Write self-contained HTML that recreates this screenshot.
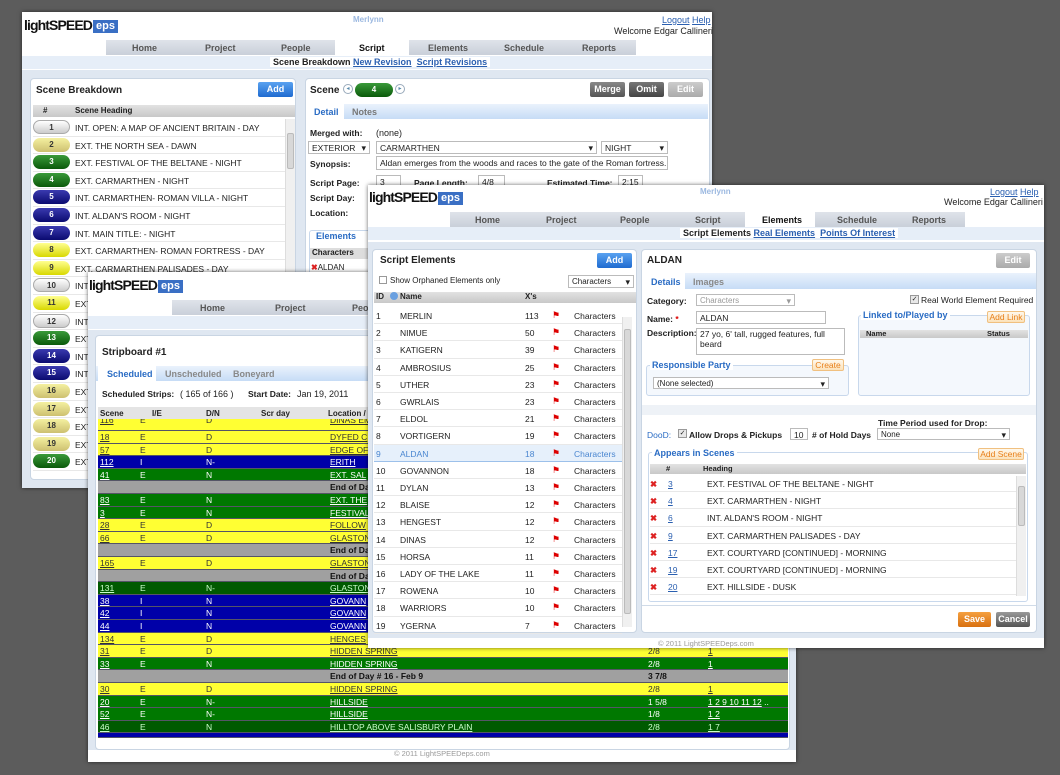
<!DOCTYPE html>
<html><head><meta charset="utf-8">
<style>
*{margin:0;padding:0;box-sizing:border-box}
body{width:1060px;height:775px;background:#5c5c5c;position:relative;overflow:hidden;font-family:"Liberation Sans",sans-serif;font-size:9px;color:#222}
.a{position:absolute;white-space:nowrap}
.win{position:absolute;background:#fff;box-shadow:0 0 4px rgba(0,0,0,.6)}
.logo{position:absolute;font-weight:bold;font-size:14px;letter-spacing:-0.9px;color:#111;font-family:"Liberation Sans Narrow","Liberation Sans",sans-serif}
.logo span{display:inline-block;background:#3a6fc4;color:#fff;font-size:11px;padding:0 3px;margin-left:1px;line-height:13px;vertical-align:1px;letter-spacing:0}
.tabs{position:absolute;height:15px;background:linear-gradient(#dfe3ea,#c9cfd9)}
.tab{position:absolute;top:2px;font-size:9px;color:#555;font-weight:bold}
.tact{position:absolute;background:#fff;height:17px;top:0}
.sub{position:absolute;height:13px;background:#e6eef8}
.lnk{color:#2a5fb0;text-decoration:underline}
.bg{position:absolute;background:#dfe7f1}
.pan{position:absolute;background:#fff;border-radius:4px;border:1px solid #c9d5e3}
.ttl{position:absolute;font-weight:bold;font-size:10px}
.btn{position:absolute;background:linear-gradient(#5aa2f0,#1f6bd0);color:#fff;font-weight:bold;text-align:center;border-radius:2px;font-size:9px;line-height:15px}
.gbtn{position:absolute;background:linear-gradient(#999,#666);color:#fff;font-weight:bold;text-align:center;border-radius:2px;font-size:9px;line-height:15px}
.hrow{position:absolute;background:linear-gradient(#e2e2e2,#c8c8c8);font-weight:bold;font-size:8px}
.pill{position:absolute;width:37px;height:14px;border-radius:7px;text-align:center;font-weight:bold;font-size:8px;line-height:14px}
.pw{background:linear-gradient(#fff,#ccc);color:#333;border:1px solid #aaa}
.py{background:linear-gradient(#ffff90,#d8d800);color:#333}
.pk{background:linear-gradient(#f4f0a0,#cdc070);color:#333}
.pg{background:linear-gradient(#3a9a3a,#0a5a0a);color:#fff}
.pb{background:linear-gradient(#3a3ab0,#0a0a70);color:#fff}
.row{position:absolute;border-bottom:1px solid #e8e8e8;font-size:8.5px}
.inp{position:absolute;border:1px solid #bbb;background:#fff;font-size:8.5px;padding-left:3px;line-height:12px}
.sel:after{content:"▾";position:absolute;right:3px;top:0;font-size:9px}
.lab{position:absolute;font-weight:bold;font-size:8.5px}
.sb{position:absolute;background:#f0f0f0;border-left:1px solid #ddd}
.sb i{position:absolute;left:1px;right:1px;background:#d8d8d8;border:1px solid #bbb;border-radius:2px}
.st{position:absolute;left:98px;width:690px;height:12.6px;font-size:8.5px;line-height:12px;border-bottom:1px solid #556}
.st span{position:absolute}
.Y{background:#ffff33;color:#333}.B{background:#0000a8;color:#fff}.G{background:#007800;color:#fff}.D{background:#005a00;color:#cfc}.R{background:#a0a0a0;color:#111;font-weight:bold}
.st u{text-decoration:underline}
.fs{position:absolute;border:1px solid #c8d8ec;border-radius:3px;background:#f4f8fd}
.fl{position:absolute;color:#2a6cc4;font-weight:bold;font-size:9px;background:#fff;padding:0 2px}
.obtn{position:absolute;background:linear-gradient(#fff8ec,#fbe2bb);border:1px solid #f0c080;color:#e8801a;font-size:8.5px;text-align:center;line-height:11px;border-radius:2px}
.x{color:#d22;font-weight:bold}
.flag{color:#d00;font-size:9px}
</style></head><body>

<!-- WINDOW 1 -->
<div class="win" style="left:22px;top:12px;width:690px;height:476px">
<div class="logo" style="left:2px;top:5px">lightSPEED<span>eps</span></div>
<div class="a" style="left:331px;top:3px;color:#9bb8e0;font-size:8px;font-weight:bold">Merlynn</div>
<div class="a" style="left:640px;top:3px"><span class="lnk">Logout</span> <span class="lnk">Help</span></div>
<div class="a" style="left:592px;top:14px">Welcome Edgar Callineri</div>
<div class="tabs" style="left:84px;top:28px;width:530px"></div>
<div class="tact" style="left:313px;top:27px;width:74px"></div>
<div class="a tab" style="left:110px;top:31px">Home</div>
<div class="a tab" style="left:183px;top:31px">Project</div>
<div class="a tab" style="left:259px;top:31px">People</div>
<div class="a tab" style="left:337px;top:31px;color:#111">Script</div>
<div class="a tab" style="left:406px;top:31px">Elements</div>
<div class="a tab" style="left:482px;top:31px">Schedule</div>
<div class="a tab" style="left:560px;top:31px">Reports</div>
<div class="sub" style="left:0;top:44px;width:690px"></div>
<div class="a" style="left:248px;top:45px;background:#fff;padding:0 3px;font-weight:bold">Scene Breakdown <span class="lnk" style="font-weight:bold">New Revision</span> &nbsp;<span class="lnk" style="font-weight:bold">Script Revisions</span></div>
<div class="bg" style="left:0;top:58px;width:690px;height:418px"></div>
</div>
<div class="pan" style="left:30px;top:78px;width:266px;height:402px"></div>
<div class="ttl" style="left:36px;top:85px">Scene Breakdown</div>
<div class="btn" style="left:258px;top:82px;width:35px">Add</div>
<div class="hrow" style="left:33px;top:105px;width:262px;height:12px"><span class="a" style="left:10px;top:1px">#</span><span class="a" style="left:42px;top:1px">Scene Heading</span></div>
<div class="sb" style="left:285px;top:119px;width:10px;height:356px"><i style="top:14px;height:36px"></i></div>

<!-- WINDOW 1 right panel -->
<div class="pan" style="left:305px;top:78px;width:405px;height:200px"></div>
<div class="ttl" style="left:310px;top:85px">Scene</div>
<div class="a" style="left:343px;top:84px;width:10px;height:10px;border-radius:5px;border:1px solid #9ab;font-size:6px;text-align:center;color:#58a">◂</div>
<div class="pill pg" style="left:355px;top:83px;width:38px">4</div>
<div class="a" style="left:395px;top:84px;width:10px;height:10px;border-radius:5px;border:1px solid #9ab;font-size:6px;text-align:center;color:#58a">▸</div>
<div class="gbtn" style="left:590px;top:82px;width:35px;background:linear-gradient(#888,#555)">Merge</div>
<div class="gbtn" style="left:629px;top:82px;width:35px;background:linear-gradient(#777,#444)">Omit</div>
<div class="gbtn" style="left:668px;top:82px;width:35px;background:linear-gradient(#ccc,#aaa)">Edit</div>
<div class="a" style="left:306px;top:104px;width:402px;height:15px;background:linear-gradient(#eaf2fc,#c6dcf6)"></div>
<div class="a" style="left:306px;top:104px;width:38px;height:16px;background:#fff"></div>
<div class="a" style="left:314px;top:107px;color:#2a6cc4;font-weight:bold">Detail</div>
<div class="a" style="left:352px;top:107px;color:#777;font-weight:bold">Notes</div>
<div class="lab" style="left:310px;top:128px">Merged with:</div><div class="a" style="left:376px;top:128px">(none)</div>
<div class="inp sel" style="left:308px;top:141px;width:62px;height:13px">EXTERIOR</div>
<div class="inp sel" style="left:376px;top:141px;width:221px;height:13px">CARMARTHEN</div>
<div class="inp sel" style="left:601px;top:141px;width:67px;height:13px">NIGHT</div>
<div class="lab" style="left:310px;top:159px">Synopsis:</div>
<div class="inp" style="left:376px;top:156px;width:292px;height:14px">Aldan emerges from the woods and races to the gate of the Roman fortress.</div>
<div class="lab" style="left:310px;top:178px">Script Page:</div><div class="inp" style="left:376px;top:175px;width:25px;height:13px">3</div>
<div class="lab" style="left:414px;top:178px">Page Length:</div><div class="inp" style="left:478px;top:175px;width:27px;height:13px">4/8</div>
<div class="lab" style="left:547px;top:178px">Estimated Time:</div><div class="inp" style="left:618px;top:175px;width:25px;height:13px">2:15</div>
<div class="lab" style="left:310px;top:193px">Script Day:</div>
<div class="lab" style="left:310px;top:208px">Location:</div>
<div class="fs" style="left:309px;top:230px;width:80px;height:50px;background:#fff"></div>
<div class="fl" style="left:314px;top:231px">Elements</div>
<div class="a" style="left:310px;top:248px;width:60px;height:11px;background:#ddd;font-weight:bold;font-size:8px;padding-left:2px">Characters</div>
<div class="a" style="left:311px;top:263px;font-size:8px"><span class="x">✖</span>ALDAN</div>

<div class="a" style="left:33px;top:119px;width:252px">
<div class="row" style="left:0;top:0;width:252px;height:17.6px"><div class="pill pw" style="left:0;top:1px">1</div><span class="a" style="left:42px;top:4px">INT. OPEN: A MAP OF ANCIENT BRITAIN - DAY</span></div>
<div class="row" style="left:0;top:17.6px;width:252px;height:17.6px"><div class="pill pk" style="left:0;top:1px">2</div><span class="a" style="left:42px;top:4px">EXT. THE NORTH SEA - DAWN</span></div>
<div class="row" style="left:0;top:35.2px;width:252px;height:17.6px"><div class="pill pg" style="left:0;top:1px">3</div><span class="a" style="left:42px;top:4px">EXT. FESTIVAL OF THE BELTANE - NIGHT</span></div>
<div class="row" style="left:0;top:52.8px;width:252px;height:17.6px"><div class="pill pg" style="left:0;top:1px">4</div><span class="a" style="left:42px;top:4px">EXT. CARMARTHEN - NIGHT</span></div>
<div class="row" style="left:0;top:70.4px;width:252px;height:17.6px"><div class="pill pb" style="left:0;top:1px">5</div><span class="a" style="left:42px;top:4px">INT. CARMARTHEN- ROMAN VILLA - NIGHT</span></div>
<div class="row" style="left:0;top:88px;width:252px;height:17.6px"><div class="pill pb" style="left:0;top:1px">6</div><span class="a" style="left:42px;top:4px">INT. ALDAN'S ROOM - NIGHT</span></div>
<div class="row" style="left:0;top:105.6px;width:252px;height:17.6px"><div class="pill pb" style="left:0;top:1px">7</div><span class="a" style="left:42px;top:4px">INT. MAIN TITLE: - NIGHT</span></div>
<div class="row" style="left:0;top:123.2px;width:252px;height:17.6px"><div class="pill py" style="left:0;top:1px">8</div><span class="a" style="left:42px;top:4px">EXT. CARMARTHEN- ROMAN FORTRESS - DAY</span></div>
<div class="row" style="left:0;top:140.8px;width:252px;height:17.6px"><div class="pill py" style="left:0;top:1px">9</div><span class="a" style="left:42px;top:4px">EXT. CARMARTHEN PALISADES - DAY</span></div>
<div class="row" style="left:0;top:158.4px;width:252px;height:17.6px"><div class="pill pw" style="left:0;top:1px">10</div><span class="a" style="left:42px;top:4px">INT</span></div>
<div class="row" style="left:0;top:176px;width:252px;height:17.6px"><div class="pill py" style="left:0;top:1px">11</div><span class="a" style="left:42px;top:4px">EXT</span></div>
<div class="row" style="left:0;top:193.6px;width:252px;height:17.6px"><div class="pill pw" style="left:0;top:1px">12</div><span class="a" style="left:42px;top:4px">INT</span></div>
<div class="row" style="left:0;top:211.2px;width:252px;height:17.6px"><div class="pill pg" style="left:0;top:1px">13</div><span class="a" style="left:42px;top:4px">EXT</span></div>
<div class="row" style="left:0;top:228.8px;width:252px;height:17.6px"><div class="pill pb" style="left:0;top:1px">14</div><span class="a" style="left:42px;top:4px">INT</span></div>
<div class="row" style="left:0;top:246.4px;width:252px;height:17.6px"><div class="pill pb" style="left:0;top:1px">15</div><span class="a" style="left:42px;top:4px">INT</span></div>
<div class="row" style="left:0;top:264px;width:252px;height:17.6px"><div class="pill pk" style="left:0;top:1px">16</div><span class="a" style="left:42px;top:4px">EXT</span></div>
<div class="row" style="left:0;top:281.6px;width:252px;height:17.6px"><div class="pill pk" style="left:0;top:1px">17</div><span class="a" style="left:42px;top:4px">EXT</span></div>
<div class="row" style="left:0;top:299.2px;width:252px;height:17.6px"><div class="pill pk" style="left:0;top:1px">18</div><span class="a" style="left:42px;top:4px">EXT</span></div>
<div class="row" style="left:0;top:316.8px;width:252px;height:17.6px"><div class="pill pk" style="left:0;top:1px">19</div><span class="a" style="left:42px;top:4px">EXT</span></div>
<div class="row" style="left:0;top:334.4px;width:252px;height:17.6px"><div class="pill pg" style="left:0;top:1px">20</div><span class="a" style="left:42px;top:4px">EXT</span></div>
</div>

<!-- WINDOW 2 -->
<div class="win" style="left:88px;top:272px;width:708px;height:490px">
<div class="logo" style="left:1px;top:5px">lightSPEED<span>eps</span></div>
<div class="tabs" style="left:84px;top:28px;width:600px"></div>
<div class="a tab" style="left:112px;top:31px">Home</div>
<div class="a tab" style="left:187px;top:31px">Project</div>
<div class="a tab" style="left:264px;top:31px">Peo</div>
<div class="sub" style="left:0;top:44px;width:708px"></div>
<div class="bg" style="left:0;top:58px;width:708px;height:420px"></div>
<div class="a" style="left:306px;top:477px;color:#999;font-size:7.5px">© 2011 LightSPEEDeps.com</div>
</div>
<div class="pan" style="left:95px;top:335px;width:695px;height:415px"></div>
<div class="ttl" style="left:102px;top:347px">Stripboard #1</div>
<div class="a" style="left:96px;top:366px;width:690px;height:15px;background:linear-gradient(#eaf2fc,#c6dcf6)"></div>
<div class="a" style="left:98px;top:366px;width:58px;height:16px;background:#fff"></div>
<div class="a" style="left:107px;top:369px;color:#2a6cc4;font-weight:bold">Scheduled</div>
<div class="a" style="left:165px;top:369px;color:#888;font-weight:bold">Unscheduled</div>
<div class="a" style="left:233px;top:369px;color:#888;font-weight:bold">Boneyard</div>
<div class="lab" style="left:102px;top:389px">Scheduled Strips:</div>
<div class="a" style="left:180px;top:389px">( 165 of 166 )</div>
<div class="lab" style="left:248px;top:389px">Start Date:</div><div class="a" style="left:297px;top:389px">Jan 19, 2011</div>
<div class="hrow" style="left:98px;top:407px;width:690px;height:13px;background:#e4e4e4"><span class="a" style="left:2px;top:2px">Scene</span><span class="a" style="left:54px;top:2px">I/E</span><span class="a" style="left:108px;top:2px">D/N</span><span class="a" style="left:163px;top:2px">Scr day</span><span class="a" style="left:230px;top:2px">Location /</span></div>

<div class="st Y" style="top:419px;height:12px;overflow:hidden"><span style="left:2px;top:-5px"><u>116</u></span><span style="left:42px;top:-5px">E</span><span style="left:108px;top:-5px">D</span><span style="left:232px;top:-5px"><u>DINAS EM</u></span></div>
<div class="st Y" style="top:431px"><span style="left:2px"><u>18</u></span><span style="left:42px">E</span><span style="left:108px">D</span><span style="left:232px"><u>DYFED C</u></span></div>
<div class="st Y" style="top:443.6px"><span style="left:2px"><u>57</u></span><span style="left:42px">E</span><span style="left:108px">D</span><span style="left:232px"><u>EDGE OF</u></span></div>
<div class="st B" style="top:456.2px"><span style="left:2px"><u>112</u></span><span style="left:42px">I</span><span style="left:108px">N-</span><span style="left:232px"><u>ERITH</u></span></div>
<div class="st G" style="top:468.8px"><span style="left:2px"><u>41</u></span><span style="left:42px">E</span><span style="left:108px">N</span><span style="left:232px"><u>EXT. SAL</u></span></div>
<div class="st R" style="top:481.4px"><span style="left:232px">End of Da</span></div>
<div class="st G" style="top:494px"><span style="left:2px"><u>83</u></span><span style="left:42px">E</span><span style="left:108px">N</span><span style="left:232px"><u>EXT. THE</u></span></div>
<div class="st G" style="top:506.6px"><span style="left:2px"><u>3</u></span><span style="left:42px">E</span><span style="left:108px">N</span><span style="left:232px"><u>FESTIVAL</u></span></div>
<div class="st Y" style="top:519.2px"><span style="left:2px"><u>28</u></span><span style="left:42px">E</span><span style="left:108px">D</span><span style="left:232px"><u>FOLLOW</u></span></div>
<div class="st Y" style="top:531.8px"><span style="left:2px"><u>66</u></span><span style="left:42px">E</span><span style="left:108px">D</span><span style="left:232px"><u>GLASTON</u></span></div>
<div class="st R" style="top:544.4px"><span style="left:232px">End of Da</span></div>
<div class="st Y" style="top:557px"><span style="left:2px"><u>165</u></span><span style="left:42px">E</span><span style="left:108px">D</span><span style="left:232px"><u>GLASTON</u></span></div>
<div class="st R" style="top:569.6px"><span style="left:232px">End of Da</span></div>
<div class="st D" style="top:582.2px"><span style="left:2px"><u>131</u></span><span style="left:42px">E</span><span style="left:108px">N-</span><span style="left:232px"><u>GLASTON</u></span></div>
<div class="st B" style="top:594.8px"><span style="left:2px"><u>38</u></span><span style="left:42px">I</span><span style="left:108px">N</span><span style="left:232px"><u>GOVANN</u></span></div>
<div class="st B" style="top:607.4px"><span style="left:2px"><u>42</u></span><span style="left:42px">I</span><span style="left:108px">N</span><span style="left:232px"><u>GOVANN</u></span></div>
<div class="st B" style="top:620px"><span style="left:2px"><u>44</u></span><span style="left:42px">I</span><span style="left:108px">N</span><span style="left:232px"><u>GOVANN</u></span></div>
<div class="st Y" style="top:632.6px"><span style="left:2px"><u>134</u></span><span style="left:42px">E</span><span style="left:108px">D</span><span style="left:232px"><u>HENGES</u></span></div>
<div class="st Y" style="top:645.2px"><span style="left:2px"><u>31</u></span><span style="left:42px">E</span><span style="left:108px">D</span><span style="left:232px"><u>HIDDEN SPRING</u></span><span style="left:550px">2/8</span><span style="left:610px"><u>1</u></span></div>
<div class="st G" style="top:657.8px"><span style="left:2px"><u>33</u></span><span style="left:42px">E</span><span style="left:108px">N</span><span style="left:232px"><u>HIDDEN SPRING</u></span><span style="left:550px">2/8</span><span style="left:610px"><u>1</u></span></div>
<div class="st R" style="top:670.4px"><span style="left:232px">End of Day # 16 - Feb 9</span><span style="left:550px">3 7/8</span></div>
<div class="st Y" style="top:683px"><span style="left:2px"><u>30</u></span><span style="left:42px">E</span><span style="left:108px">D</span><span style="left:232px"><u>HIDDEN SPRING</u></span><span style="left:550px">2/8</span><span style="left:610px"><u>1</u></span></div>
<div class="st G" style="top:695.6px"><span style="left:2px"><u>20</u></span><span style="left:42px">E</span><span style="left:108px">N-</span><span style="left:232px"><u>HILLSIDE</u></span><span style="left:550px">1 5/8</span><span style="left:610px"><u>1 2 9 10 11 12</u> ..</span></div>
<div class="st G" style="top:708.2px"><span style="left:2px"><u>52</u></span><span style="left:42px">E</span><span style="left:108px">N-</span><span style="left:232px"><u>HILLSIDE</u></span><span style="left:550px">1/8</span><span style="left:610px"><u>1 2</u></span></div>
<div class="st D" style="top:720.8px"><span style="left:2px"><u>46</u></span><span style="left:42px">E</span><span style="left:108px">N</span><span style="left:232px"><u>HILLTOP ABOVE SALISBURY PLAIN</u></span><span style="left:550px">2/8</span><span style="left:610px"><u>1 7</u></span></div>
<div class="st B" style="top:733.4px;height:5px;overflow:hidden"></div>

<!-- WINDOW 3 -->
<div class="win" style="left:368px;top:185px;width:676px;height:463px">
<div class="logo" style="left:1px;top:4px">lightSPEED<span>eps</span></div>
<div class="a" style="left:332px;top:2px;color:#9bb8e0;font-size:8px;font-weight:bold">Merlynn</div>
<div class="a" style="left:622px;top:2px"><span class="lnk">Logout</span> <span class="lnk">Help</span></div>
<div class="a" style="left:576px;top:12px">Welcome Edgar Callineri</div>
<div class="tabs" style="left:82px;top:27px;width:515px"></div>
<div class="tact" style="left:377px;top:26px;width:70px"></div>
<div class="a tab" style="left:107px;top:30px">Home</div>
<div class="a tab" style="left:178px;top:30px">Project</div>
<div class="a tab" style="left:252px;top:30px">People</div>
<div class="a tab" style="left:327px;top:30px">Script</div>
<div class="a tab" style="left:394px;top:30px;color:#111">Elements</div>
<div class="a tab" style="left:469px;top:30px">Schedule</div>
<div class="a tab" style="left:544px;top:30px">Reports</div>
<div class="sub" style="left:0;top:42px;width:676px"></div>
<div class="a" style="left:312px;top:43px;background:#fff;padding:0 3px;font-weight:bold">Script Elements <span class="lnk">Real Elements</span> &nbsp;<span class="lnk">Points Of Interest</span></div>
<div class="bg" style="left:0;top:57px;width:676px;height:396px"></div>
<div class="a" style="left:290px;top:454px;color:#999;font-size:7.5px">© 2011 LightSPEEDeps.com</div>
</div>
<div class="pan" style="left:372px;top:249px;width:265px;height:384px"></div>
<div class="ttl" style="left:380px;top:255px">Script Elements</div>
<div class="btn" style="left:597px;top:253px;width:35px">Add</div>
<div class="a" style="left:379px;top:276px;width:8px;height:8px;border:1px solid #999;background:#fff"></div>
<div class="a" style="left:390px;top:276px;font-size:8px">Show Orphaned Elements only</div>
<div class="inp sel" style="left:568px;top:275px;width:66px;height:13px;font-size:8px">Characters</div>
<div class="hrow" style="left:374px;top:292px;width:262px;height:11px"><span class="a" style="left:2px;top:0">ID</span><span class="a" style="left:16px;top:0;width:8px;height:8px;border-radius:4px;background:#6aa0e0"></span><span class="a" style="left:26px;top:0">Name</span><span class="a" style="left:151px;top:0">X's</span></div>
<div class="sb" style="left:622px;top:317px;width:10px;height:310px"><i style="top:12px;height:285px"></i></div>
<div class="a" style="left:374px;top:307px;width:248px;font-size:8px">
<div class="row" style="top:0;width:248px;height:17.2px"><span class="a" style="left:2px;top:4px">1</span><span class="a" style="left:26px;top:4px">MERLIN</span><span class="a" style="left:151px;top:4px">113</span><span class="a flag" style="left:178px;top:3px">⚑</span><span class="a" style="left:200px;top:4px">Characters</span></div>
<div class="row" style="top:17.2px;width:248px;height:17.2px"><span class="a" style="left:2px;top:4px">2</span><span class="a" style="left:26px;top:4px">NIMUE</span><span class="a" style="left:151px;top:4px">50</span><span class="a flag" style="left:178px;top:3px">⚑</span><span class="a" style="left:200px;top:4px">Characters</span></div>
<div class="row" style="top:34.4px;width:248px;height:17.2px"><span class="a" style="left:2px;top:4px">3</span><span class="a" style="left:26px;top:4px">KATIGERN</span><span class="a" style="left:151px;top:4px">39</span><span class="a flag" style="left:178px;top:3px">⚑</span><span class="a" style="left:200px;top:4px">Characters</span></div>
<div class="row" style="top:51.6px;width:248px;height:17.2px"><span class="a" style="left:2px;top:4px">4</span><span class="a" style="left:26px;top:4px">AMBROSIUS</span><span class="a" style="left:151px;top:4px">25</span><span class="a flag" style="left:178px;top:3px">⚑</span><span class="a" style="left:200px;top:4px">Characters</span></div>
<div class="row" style="top:68.8px;width:248px;height:17.2px"><span class="a" style="left:2px;top:4px">5</span><span class="a" style="left:26px;top:4px">UTHER</span><span class="a" style="left:151px;top:4px">23</span><span class="a flag" style="left:178px;top:3px">⚑</span><span class="a" style="left:200px;top:4px">Characters</span></div>
<div class="row" style="top:86px;width:248px;height:17.2px"><span class="a" style="left:2px;top:4px">6</span><span class="a" style="left:26px;top:4px">GWRLAIS</span><span class="a" style="left:151px;top:4px">23</span><span class="a flag" style="left:178px;top:3px">⚑</span><span class="a" style="left:200px;top:4px">Characters</span></div>
<div class="row" style="top:103.2px;width:248px;height:17.2px"><span class="a" style="left:2px;top:4px">7</span><span class="a" style="left:26px;top:4px">ELDOL</span><span class="a" style="left:151px;top:4px">21</span><span class="a flag" style="left:178px;top:3px">⚑</span><span class="a" style="left:200px;top:4px">Characters</span></div>
<div class="row" style="top:120.4px;width:248px;height:17.2px"><span class="a" style="left:2px;top:4px">8</span><span class="a" style="left:26px;top:4px">VORTIGERN</span><span class="a" style="left:151px;top:4px">19</span><span class="a flag" style="left:178px;top:3px">⚑</span><span class="a" style="left:200px;top:4px">Characters</span></div>
<div class="row" style="top:137.6px;width:248px;height:17.2px;background:#e6f0fb;color:#4a86d0;border-bottom:1px solid #9cc0ea"><span class="a" style="left:2px;top:4px">9</span><span class="a" style="left:26px;top:4px">ALDAN</span><span class="a" style="left:151px;top:4px">18</span><span class="a flag" style="left:178px;top:3px">⚑</span><span class="a" style="left:200px;top:4px">Characters</span></div>
<div class="row" style="top:154.8px;width:248px;height:17.2px"><span class="a" style="left:2px;top:4px">10</span><span class="a" style="left:26px;top:4px">GOVANNON</span><span class="a" style="left:151px;top:4px">18</span><span class="a flag" style="left:178px;top:3px">⚑</span><span class="a" style="left:200px;top:4px">Characters</span></div>
<div class="row" style="top:172px;width:248px;height:17.2px"><span class="a" style="left:2px;top:4px">11</span><span class="a" style="left:26px;top:4px">DYLAN</span><span class="a" style="left:151px;top:4px">13</span><span class="a flag" style="left:178px;top:3px">⚑</span><span class="a" style="left:200px;top:4px">Characters</span></div>
<div class="row" style="top:189.2px;width:248px;height:17.2px"><span class="a" style="left:2px;top:4px">12</span><span class="a" style="left:26px;top:4px">BLAISE</span><span class="a" style="left:151px;top:4px">12</span><span class="a flag" style="left:178px;top:3px">⚑</span><span class="a" style="left:200px;top:4px">Characters</span></div>
<div class="row" style="top:206.4px;width:248px;height:17.2px"><span class="a" style="left:2px;top:4px">13</span><span class="a" style="left:26px;top:4px">HENGEST</span><span class="a" style="left:151px;top:4px">12</span><span class="a flag" style="left:178px;top:3px">⚑</span><span class="a" style="left:200px;top:4px">Characters</span></div>
<div class="row" style="top:223.6px;width:248px;height:17.2px"><span class="a" style="left:2px;top:4px">14</span><span class="a" style="left:26px;top:4px">DINAS</span><span class="a" style="left:151px;top:4px">12</span><span class="a flag" style="left:178px;top:3px">⚑</span><span class="a" style="left:200px;top:4px">Characters</span></div>
<div class="row" style="top:240.8px;width:248px;height:17.2px"><span class="a" style="left:2px;top:4px">15</span><span class="a" style="left:26px;top:4px">HORSA</span><span class="a" style="left:151px;top:4px">11</span><span class="a flag" style="left:178px;top:3px">⚑</span><span class="a" style="left:200px;top:4px">Characters</span></div>
<div class="row" style="top:258px;width:248px;height:17.2px"><span class="a" style="left:2px;top:4px">16</span><span class="a" style="left:26px;top:4px">LADY OF THE LAKE</span><span class="a" style="left:151px;top:4px">11</span><span class="a flag" style="left:178px;top:3px">⚑</span><span class="a" style="left:200px;top:4px">Characters</span></div>
<div class="row" style="top:275.2px;width:248px;height:17.2px"><span class="a" style="left:2px;top:4px">17</span><span class="a" style="left:26px;top:4px">ROWENA</span><span class="a" style="left:151px;top:4px">10</span><span class="a flag" style="left:178px;top:3px">⚑</span><span class="a" style="left:200px;top:4px">Characters</span></div>
<div class="row" style="top:292.4px;width:248px;height:17.2px"><span class="a" style="left:2px;top:4px">18</span><span class="a" style="left:26px;top:4px">WARRIORS</span><span class="a" style="left:151px;top:4px">10</span><span class="a flag" style="left:178px;top:3px">⚑</span><span class="a" style="left:200px;top:4px">Characters</span></div>
<div class="row" style="top:309.6px;width:248px;height:17.2px"><span class="a" style="left:2px;top:4px">19</span><span class="a" style="left:26px;top:4px">YGERNA</span><span class="a" style="left:151px;top:4px">7</span><span class="a flag" style="left:178px;top:3px">⚑</span><span class="a" style="left:200px;top:4px">Characters</span></div>
</div>

<!-- right panel window 3 -->
<div class="pan" style="left:641px;top:249px;width:396px;height:384px"></div>
<div class="ttl" style="left:647px;top:255px">ALDAN</div>
<div class="gbtn" style="left:996px;top:253px;width:34px;background:linear-gradient(#ccc,#aaa)">Edit</div>
<div class="a" style="left:643px;top:273px;width:393px;height:16px;background:linear-gradient(#eaf2fc,#c6dcf6)"></div>
<div class="a" style="left:643px;top:273px;width:42px;height:17px;background:#fff"></div>
<div class="a" style="left:651px;top:277px;color:#2a6cc4;font-weight:bold">Details</div>
<div class="a" style="left:693px;top:277px;color:#888;font-weight:bold">Images</div>
<div class="lab" style="left:647px;top:296px">Category:</div>
<div class="inp sel" style="left:696px;top:294px;width:99px;height:12px;color:#999;font-size:8px">Characters</div>
<div class="a" style="left:910px;top:295px;width:9px;height:9px;border:1px solid #999;background:#e8e8e8;font-size:7px;line-height:8px;text-align:center">✓</div>
<div class="a" style="left:921px;top:295px;font-size:8.5px">Real World Element Required</div>
<div class="lab" style="left:647px;top:314px">Name: <span style="color:#d00">*</span></div>
<div class="inp" style="left:696px;top:311px;width:130px;height:13px">ALDAN</div>
<div class="lab" style="left:647px;top:328px">Description:</div>
<div class="inp" style="left:696px;top:328px;width:149px;height:27px;line-height:10px;white-space:normal;padding-right:14px">27 yo, 6' tall, rugged features, full beard</div>
<div class="fs" style="left:646px;top:365px;width:203px;height:31px"></div>
<div class="fl" style="left:650px;top:360px">Responsible Party</div>
<div class="obtn" style="left:812px;top:359px;width:32px;height:12px">Create</div>
<div class="inp sel" style="left:653px;top:377px;width:176px;height:12px;font-size:8px">(None selected)</div>
<div class="fs" style="left:858px;top:315px;width:172px;height:81px"></div>
<div class="fl" style="left:861px;top:310px">Linked to/Played by</div>
<div class="obtn" style="left:987px;top:311px;width:38px;height:12px">Add Link</div>
<div class="hrow" style="left:860px;top:330px;width:168px;height:8px;font-size:7.5px;line-height:8px"><span class="a" style="left:6px">Name</span><span class="a" style="left:127px">Status</span></div>
<div class="a" style="left:642px;top:405px;width:394px;height:10px;background:#eef2f7"></div>
<div class="a" style="left:647px;top:430px;color:#2a6cc4;font-size:8.5px">DooD:</div>
<div class="a" style="left:678px;top:429px;width:9px;height:9px;border:1px solid #999;background:#e8e8e8;font-size:7px;line-height:8px;text-align:center">✓</div>
<div class="lab" style="left:689px;top:430px">Allow Drops &amp; Pickups</div>
<div class="inp" style="left:790px;top:428px;width:18px;height:12px">10</div>
<div class="lab" style="left:812px;top:430px"># of Hold Days</div>
<div class="lab" style="left:878px;top:418px">Time Period used for Drop:</div>
<div class="inp sel" style="left:877px;top:428px;width:133px;height:12px;font-size:8px">None</div>
<div class="fs" style="left:648px;top:452px;width:380px;height:150px;background:#fff"></div>
<div class="fl" style="left:652px;top:448px">Appears in Scenes</div>
<div class="obtn" style="left:978px;top:448px;width:46px;height:12px">Add Scene</div>
<div class="hrow" style="left:650px;top:464px;width:376px;height:10px;font-size:7.5px;line-height:10px"><span class="a" style="left:16px">#</span><span class="a" style="left:53px">Heading</span></div>
<div class="sb" style="left:1016px;top:476px;width:10px;height:120px"><i style="top:10px;height:40px"></i></div>
<div class="a" style="left:650px;top:475px;width:366px;font-size:8px">
<div class="row" style="top:0;width:366px;height:17.2px"><span class="a x" style="left:0;top:4px">✖</span><span class="a lnk" style="left:18px;top:4px">3</span><span class="a" style="left:57px;top:4px">EXT. FESTIVAL OF THE BELTANE - NIGHT</span></div>
<div class="row" style="top:17.2px;width:366px;height:17.2px"><span class="a x" style="left:0;top:4px">✖</span><span class="a lnk" style="left:18px;top:4px">4</span><span class="a" style="left:57px;top:4px">EXT. CARMARTHEN - NIGHT</span></div>
<div class="row" style="top:34.4px;width:366px;height:17.2px"><span class="a x" style="left:0;top:4px">✖</span><span class="a lnk" style="left:18px;top:4px">6</span><span class="a" style="left:57px;top:4px">INT. ALDAN'S ROOM - NIGHT</span></div>
<div class="row" style="top:51.6px;width:366px;height:17.2px"><span class="a x" style="left:0;top:4px">✖</span><span class="a lnk" style="left:18px;top:4px">9</span><span class="a" style="left:57px;top:4px">EXT. CARMARTHEN PALISADES - DAY</span></div>
<div class="row" style="top:68.8px;width:366px;height:17.2px"><span class="a x" style="left:0;top:4px">✖</span><span class="a lnk" style="left:18px;top:4px">17</span><span class="a" style="left:57px;top:4px">EXT. COURTYARD [CONTINUED] - MORNING</span></div>
<div class="row" style="top:86px;width:366px;height:17.2px"><span class="a x" style="left:0;top:4px">✖</span><span class="a lnk" style="left:18px;top:4px">19</span><span class="a" style="left:57px;top:4px">EXT. COURTYARD [CONTINUED] - MORNING</span></div>
<div class="row" style="top:103.2px;width:366px;height:17.2px"><span class="a x" style="left:0;top:4px">✖</span><span class="a lnk" style="left:18px;top:4px">20</span><span class="a" style="left:57px;top:4px">EXT. HILLSIDE - DUSK</span></div>
</div>
<div class="a" style="left:642px;top:605px;width:394px;height:1px;background:#d0dbe8"></div>
<div class="gbtn" style="left:958px;top:612px;width:33px;background:linear-gradient(#f5a040,#d87010)">Save</div>
<div class="gbtn" style="left:996px;top:612px;width:34px;background:linear-gradient(#999,#555)">Cancel</div>

</body></html>
